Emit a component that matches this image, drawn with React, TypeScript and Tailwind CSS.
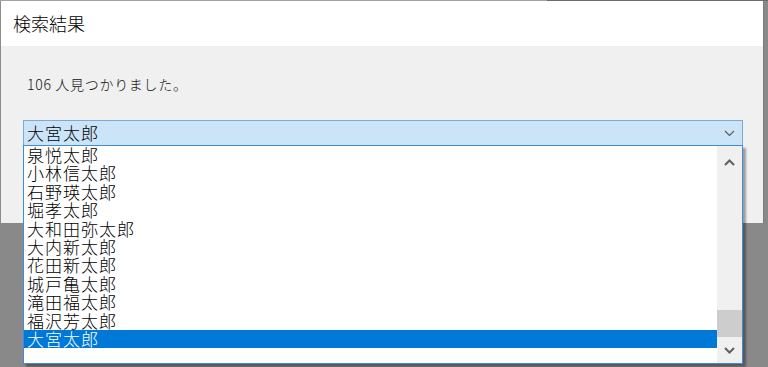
const NAMES = [
  "泉悦太郎",
  "小林信太郎",
  "石野瑛太郎",
  "堀孝太郎",
  "大和田弥太郎",
  "大内新太郎",
  "花田新太郎",
  "城戸亀太郎",
  "滝田福太郎",
  "福沢芳太郎",
  "大宮太郎",
];

const SELECTED = "大宮太郎";

function Chevron({ up = false, bold = false }: { up?: boolean; bold?: boolean }) {
  return (
    <svg width="11" height="7" viewBox="0 0 11 7" className="block">
      <path
        d={up ? "M1 6 L5.5 1.5 L10 6" : "M1 1 L5.5 5.5 L10 1"}
        fill="none"
        stroke={bold ? "#606060" : "#5a5a5a"}
        strokeWidth={bold ? 2 : 1.1}
      />
    </svg>
  );
}

export default function App() {
  const font = { fontFamily: '"Noto Sans CJK JP", "Noto Sans", sans-serif' };

  return (
    <div className="relative w-[768px] h-[367px] overflow-hidden bg-[#898989]" style={font}>
      {/* top edge of the window frame */}
      <div className="flex h-px">
        <div className="w-[547px] bg-[#a3a3a3]" />
        <div className="flex-1 bg-[#6b6b6b]" />
      </div>

      {/* dialog */}
      <div className="w-[764px] h-[222px] flex flex-col bg-[#f0f0f0] border-l border-r border-l-[#8c8c8c] border-r-[#7c7c7c]">
        <div className="h-[45px] bg-white flex items-center pl-[12px] text-[18px] font-light text-black">
          検索結果
        </div>
        <div className="pl-[22px] pr-[20px]">
          <div className="mt-[28px] h-[20px] leading-[20px] text-[14px] tracking-[0.7px] font-light text-[#111] pl-[4px]">
            106 人見つかりました。
          </div>
          <div className="mt-[26px] h-[26px] w-[720px] bg-[#cce4f7] border border-[#7ea9d6] border-b-[#0078d7] flex items-center justify-between pl-[3px] pr-[7px]">
            <span className="text-[17px] leading-[22px] tracking-[1px] font-light text-black">{SELECTED}</span>
            <Chevron />
          </div>
        </div>
      </div>

      {/* opened drop-down list */}
      <div className="absolute left-[23px] top-[145px] w-[720px] h-[219px] bg-white border border-[#3b8ddb] flex shadow-[3px_3px_2px_rgba(0,0,0,0.35)]">
        <div className="flex-1 flex flex-col">
          {NAMES.map((name) => (
            <div
              key={name}
              className={
                name === SELECTED
                  ? "h-[18.4px] leading-[18.4px] text-[17px] tracking-[1px] font-light pl-[3px] bg-[#0078d7] text-white"
                  : "h-[18.4px] leading-[18.4px] text-[17px] tracking-[1px] font-light pl-[3px] text-black"
              }
            >
              {name}
            </div>
          ))}
        </div>
        <div className="w-[25px] bg-[#f0f0f0] flex flex-col">
          <div className="h-[32px] flex items-center justify-center">
            <Chevron up bold />
          </div>
          <div className="flex-1" />
          <div className="h-[27px] bg-[#cdcdcd]" />
          <div className="h-[26px] flex items-center justify-center">
            <Chevron bold />
          </div>
        </div>
      </div>
    </div>
  );
}
